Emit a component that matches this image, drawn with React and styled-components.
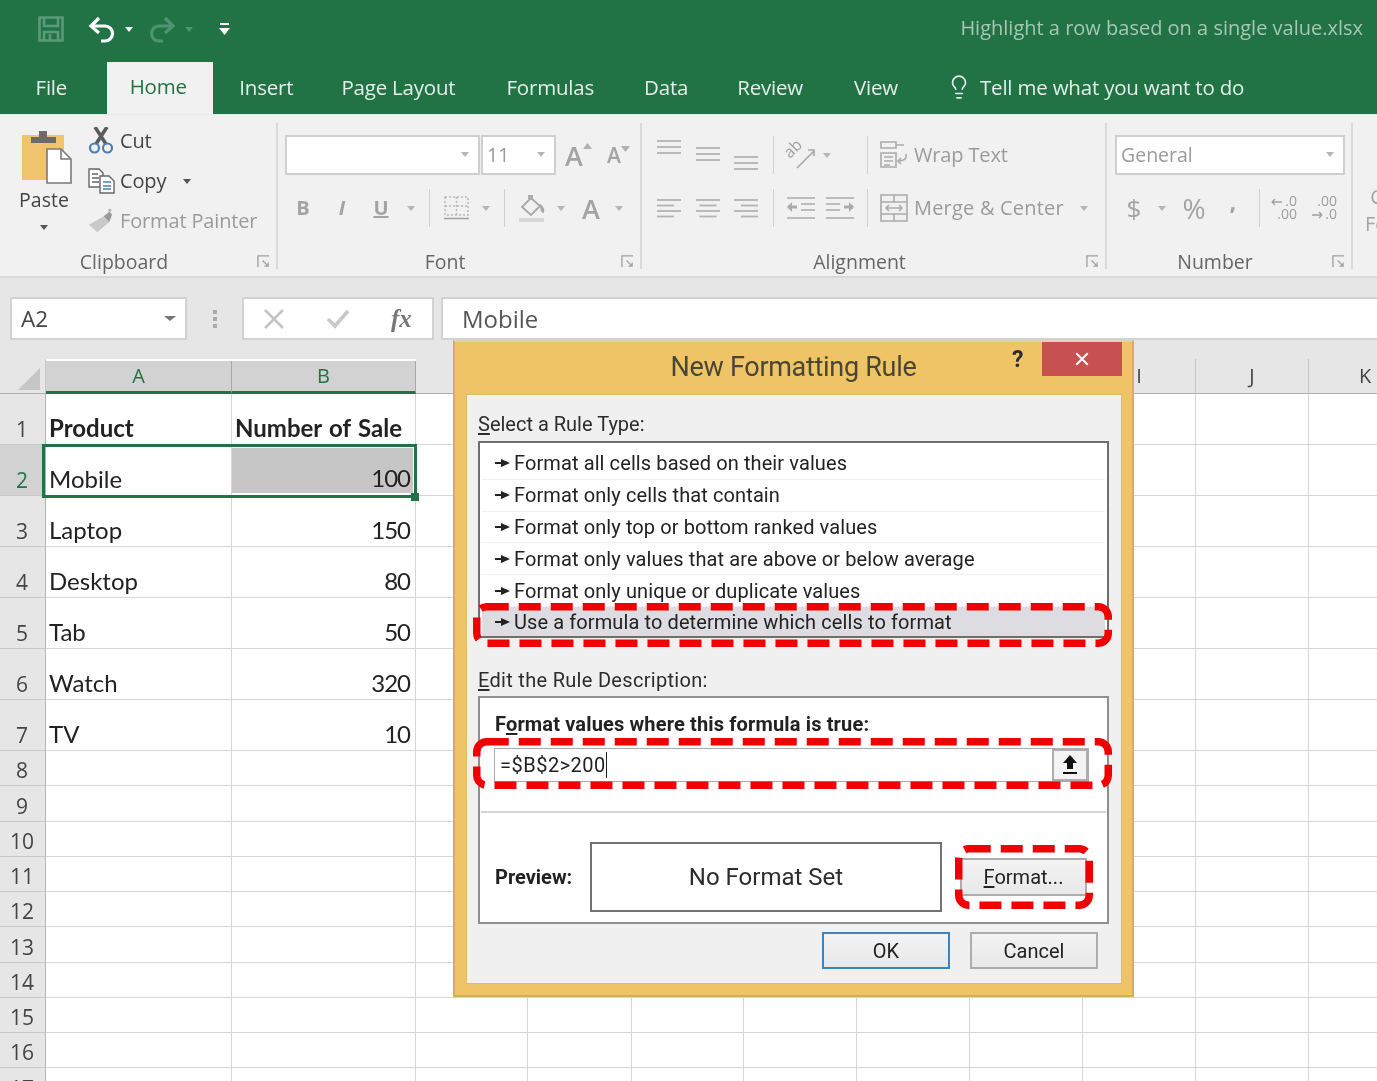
import React from "react";
import styled, { createGlobalStyle } from "styled-components";
import { Lightbulb } from "lucide-react";

const Global = createGlobalStyle`
  html, body { margin: 0; padding: 0; background: #fff; overflow: hidden; }
  * { box-sizing: border-box; }
`;

const Page = styled.div`
  position: relative;
  width: 1377px;
  height: 1081px;
  overflow: hidden;
  font-family: "Open Sans", "Noto Sans", sans-serif;
  color: #444;
  filter: blur(0.3px);
`;

const TitleBar = styled.div`
  height: 62px;
  padding: 0 14px 4px 38px;
  display: flex;
  align-items: center;
  background: #217346;
`;
const DocTitle = styled.div`
  margin-left: auto;
  margin-bottom: 4px;
  font-size: 20px;
  letter-spacing: 0;
  color: #a6c7b4;
  white-space: nowrap;
`;

const Tabs = styled.div`
  height: 52px;
  padding-left: 10px;
  display: flex;
  align-items: stretch;
  background: #217346;
`;
const Tab = styled.div`
  padding: ${(p) => (p.$active ? "0 26px 4px 23px" : "0 25.5px 2px")};
  margin-left: ${(p) => p.$ml || 0}px;
  display: flex;
  align-items: center;
  gap: 8px;
  font-size: 20.5px;
  letter-spacing: -0.2px;
  color: ${(p) => (p.$active ? "#217346" : "#e4eee8")};
  background: ${(p) => (p.$active ? "#f1f1f1" : "transparent")};
  white-space: nowrap;
`;

const Ribbon = styled.div`
  height: 164px;
  padding: 8px 0 7px;
  display: flex;
  align-items: stretch;
  background: #f1f1f1;
  border-top: 1px solid #dff0e6;
  border-bottom: 2px solid #d8d8d8;
`;
const Group = styled.section`
  width: ${(p) => p.$w}px;
  flex: none;
  display: flex;
  flex-direction: column;
  border-right: 2px solid #dadada;
`;
const GroupBody = styled.div`
  flex: 1;
  min-height: 0;
  display: ${(p) => (p.$row ? "flex" : "block")};
  padding-top: ${(p) => (p.$row ? 0 : 12)}px;
`;
const GroupFoot = styled.div`
  height: 18px;
  display: flex;
  align-items: center;
`;
const GroupLabel = styled.div`
  flex: 1;
  padding-top: 4px;
  text-align: center;
  font-size: 19.5px;
  line-height: 18px;
  color: #666;
  white-space: nowrap;
`;
const LauncherSlot = styled.div`
  width: 28px;
  height: 16px;
  display: flex;
  justify-content: center;
  padding: 3px 0 0 3px;
`;
const Row = styled.div`
  height: 40px;
  padding-left: ${(p) => p.$pl || 0}px;
  margin-top: ${(p) => p.$mt || 0}px;
  display: flex;
  align-items: center;
`;
const Tool = styled.div`
  width: ${(p) => p.$w}px;
  margin-left: ${(p) => p.$ml || 0}px;
  flex: none;
  display: flex;
  align-items: center;
  justify-content: center;
  font-size: ${(p) => p.$fs || 20}px;
  font-weight: ${(p) => p.$weight || 400};
  font-style: ${(p) => (p.$italic ? "italic" : "normal")};
  text-decoration: ${(p) => (p.$under ? "underline" : "none")};
  color: ${(p) => p.$color || "#a3a3a3"};
  line-height: 1;
`;
const Comma = styled(Tool)`
  padding-bottom: 14px;
`;
const Sep = styled.div`
  width: 1px;
  height: 38px;
  margin-left: ${(p) => p.$ml || 0}px;
  flex: none;
  background: #d0d0d0;
`;
const Caret = styled.div`
  width: 0;
  height: 0;
  margin-left: ${(p) => p.$ml || 0}px;
  flex: none;
  border-left: ${(p) => p.$s || 4.5}px solid transparent;
  border-right: ${(p) => p.$s || 4.5}px solid transparent;
  border-top: ${(p) => (p.$s ? p.$s * 0.9 : 5)}px solid ${(p) => p.$color || "#b5b5b5"};
`;
const RibbonText = styled.div`
  margin-left: ${(p) => p.$ml || 0}px;
  margin-bottom: 2px;
  flex: none;
  font-size: 20px;
  letter-spacing: ${(p) => p.$ls ?? -0.15}px;
  color: ${(p) => p.$color || "#9b9b9b"};
  white-space: nowrap;
`;
const ComboBox = styled.div`
  width: ${(p) => p.$w}px;
  height: 40px;
  margin-left: ${(p) => p.$ml || 0}px;
  padding: 0 9px 2px 4px;
  flex: none;
  display: flex;
  align-items: center;
  justify-content: space-between;
  font-size: 19.5px;
  color: #9b9b9b;
  background: #fff;
  border: 2px solid #cfcfcf;
`;
const PasteColumn = styled.div`
  width: 88px;
  flex: none;
  padding-top: 6px;
  display: flex;
  flex-direction: column;
  align-items: center;
`;
const PasteArt = styled.div`
  margin-left: 6px;
  height: 56px;
`;
const PasteLabel = styled.div`
  font-size: 19.5px;
  line-height: 30px;
  color: #444;
`;
const PasteCaret = styled.div`
  margin-top: 10px;
`;
const Rows = styled.div`
  margin-top: -2px;
  flex: 1;
`;
const Clipped = styled.div`
  padding: 60px 0 0 12px;
  font-size: 20px;
  line-height: 27px;
  color: #a3a3a3;
  white-space: nowrap;
`;

const FormulaBar = styled.div`
  height: 81px;
  padding: 19px 0 0 10px;
  display: flex;
  align-items: flex-start;
  background: #e6e6e6;
`;
const NameBox = styled.div`
  width: 177px;
  height: 43px;
  padding: 0 9px 0 9px;
  flex: none;
  display: flex;
  align-items: center;
  justify-content: space-between;
  font-size: 22.5px;
  color: #444;
  background: #fff;
  border: 2px solid #d2d2d2;
`;
const Dots = styled.div`
  width: 4px;
  height: 18px;
  margin: 13px 25px 0 26px;
  flex: none;
  display: flex;
  flex-direction: column;
  justify-content: space-between;
  &::before, &::after { content: ""; height: 4px; background: #aaa; }
  background: linear-gradient(#aaa, #aaa) 0 7px / 4px 4px no-repeat;
`;
const FxBox = styled.div`
  width: 192px;
  height: 43px;
  flex: none;
  display: flex;
  align-items: center;
  background: #fff;
  border: 2px solid #d2d2d2;
`;
const FxText = styled.span`
  margin-left: 41px;
  font-family: "Liberation Serif", serif;
  font-style: italic;
  font-weight: 700;
  font-size: 25px;
  color: #777;
`;
const FormulaInput = styled.div`
  width: 940px;
  height: 43px;
  margin-left: 7px;
  padding: 0 0 1px 19px;
  flex: none;
  display: flex;
  align-items: center;
  font-size: 24px;
  color: #555;
  background: #fff;
  border: 2px solid #d2d2d2;
`;

const Sheet = styled.div`
  position: relative;
  display: grid;
  grid-template-columns: 46px 186px 184px 112px 104px 112px 113px 113px 113px 113px 113px 113px;
  grid-template-rows: 35px repeat(7, 51px) repeat(10, 35.25px);
  height: 723px;
  overflow: hidden;
  background: #fff;
  font-family: "Lato", "Open Sans", sans-serif;
`;
const Corner = styled.div`
  padding: 9px 0 0 18px;
  background: #e6e6e6;
  border-bottom: 1px solid #b0b0b0;
  border-right: 1px solid #c8c8c8;
`;
const ColHead = styled.div`
  margin-top: ${(p) => (p.$on ? 2 : 0)}px;
  padding-bottom: 2px;
  display: flex;
  align-items: center;
  justify-content: center;
  font-family: "Open Sans", sans-serif;
  font-size: 20px;
  color: ${(p) => (p.$on ? "#217346" : "#444")};
  background: ${(p) => (p.$on ? "#d2d2d2" : "#e6e6e6")};
  border-right: 1px solid ${(p) => (p.$on ? "#a8a8a8" : "#c4c4c4")};
  border-bottom: ${(p) => (p.$on ? "3px solid #217346" : "1px solid #b0b0b0")};
`;
const RowHead = styled.div`
  padding: 0 1px 1px 0;
  display: flex;
  align-items: flex-end;
  justify-content: center;
  font-family: "Open Sans", sans-serif;
  font-size: 21px;
  line-height: 28px;
  color: ${(p) => (p.$on ? "#217346" : "#444")};
  background: ${(p) => (p.$on ? "#d2d2d2" : "#e6e6e6")};
  border-right: 1px solid #b4b4b4;
  border-bottom: 1px solid #c8c8c8;
`;
const Cell = styled.div`
  padding: 0 5px 1px 3px;
  display: flex;
  align-items: flex-end;
  justify-content: ${(p) => (p.$num ? "flex-end" : "flex-start")};
  font-size: 24px;
  line-height: 30px;
  font-weight: ${(p) => (p.$bold ? 700 : 400)};
  word-spacing: ${(p) => (p.$bold ? 1.5 : 0)}px;
  letter-spacing: ${(p) => (p.$num ? -1 : 0)}px;
  color: #222;
  white-space: nowrap;
  background: ${(p) => (p.$fill ? "#c6c6c6" : "#fff")};
  border-right: 1px solid #d6d6d6;
  border-bottom: 1px solid #d6d6d6;
  ${(p) => p.$fill && "border: solid #fff; border-width: 3px 3px 3px 0; padding: 0 3px 0 0;"}
`;
const Selection = styled.div`
  position: absolute;
  left: 42px;
  top: 85px;
  width: 375px;
  height: 54px;
  border: 3px solid #217346;
  &::after {
    content: "";
    position: absolute;
    right: -5px;
    bottom: -6px;
    width: 8px;
    height: 8px;
    background: #217346;
  }
`;

const Dialog = styled.div`
  position: absolute;
  left: 453px;
  top: 340px;
  width: 681px;
  height: 657px;
  display: flex;
  flex-direction: column;
  background: #efc466;
  border: 2px solid #d6ad58;
  border-top-color: #ddd3b8;
  font-family: "Roboto", "Open Sans", sans-serif;
  color: #2c2c2c;
`;
const DialogHead = styled.div`
  position: relative;
  height: 52px;
  flex: none;
  display: flex;
  align-items: center;
  justify-content: center;
  padding: 0 0 2px 0;
  font-size: 27px;
  letter-spacing: -0.3px;
  color: #4a4636;
`;
const Help = styled.div`
  position: absolute;
  left: 557px;
  top: 4px;
  font-size: 23px;
  font-weight: 700;
  color: #2c2c2c;
`;
const Close = styled.div`
  position: absolute;
  left: 587px;
  top: 0;
  width: 80px;
  height: 34px;
  display: flex;
  align-items: center;
  justify-content: center;
  background: #c75050;
`;
const Panel = styled.div`
  flex: 1;
  margin: 0 10px 11px 11px;
  padding: 0 12px 0 11px;
  background: #f0f0f0;
  border: 1px solid #dfbb69;
`;
const FieldLabel = styled.div`
  height: 24px;
  margin-top: ${(p) => p.$mt}px;
  font-size: 20px;
  line-height: 24px;
  letter-spacing: ${(p) => p.$ls || 0}px;
  color: #2c2c2c;
  white-space: nowrap;
  u { text-underline-offset: 2px; }
`;
const RuleList = styled.div`
  height: 197px;
  margin-top: 5px;
  padding: 5px 2px 0;
  overflow: hidden;
  background: #fff;
  border: 2px solid #6e6e6e;
`;
const RuleItem = styled.div`
  height: 31.8px;
  padding-left: 13px;
  display: flex;
  align-items: center;
  gap: 4px;
  font-size: 20px;
  letter-spacing: 0.1px;
  color: #222;
  white-space: nowrap;
  background: ${(p) => (p.$on ? "#dcdce1" : "#fff")};
  border-bottom: 1px solid #f0f0f0;
`;
const DescBox = styled.div`
  height: 228px;
  margin-top: 4px;
  padding: 14px 15px 0;
  background: #fff;
  border: 2px solid #8f8f8f;
`;
const DescTitle = styled.div`
  height: 24px;
  font-size: 20px;
  line-height: 24px;
  font-weight: 700;
  letter-spacing: 0.15px;
  color: #222;
  white-space: nowrap;
  u { text-underline-offset: 2px; }
`;
const RefInput = styled.div`
  width: 595px;
  height: 34px;
  margin: 12px 0 0 -1px;
  padding: 0 0 0 5px;
  display: flex;
  align-items: center;
  font-size: 20px;
  letter-spacing: 0.5px;
  color: #222;
  border: 1px solid #ababab;
`;
const TextCursor = styled.span`
  width: 1.5px;
  height: 26px;
  flex: none;
  background: #222;
`;
const RefButton = styled.div`
  width: 36px;
  height: 32px;
  margin-left: auto;
  flex: none;
  display: flex;
  align-items: center;
  justify-content: center;
  background: #f4f4f4;
  border: 2px solid #adadad;
`;
const Divider = styled.div`
  width: 625px;
  height: 2px;
  margin: 29px 0 0 -14px;
  background: #d6d6d6;
`;
const PreviewRow = styled.div`
  height: 70px;
  margin-top: 29px;
  display: flex;
  align-items: center;
`;
const PreviewLabel = styled.div`
  width: 95px;
  flex: none;
  font-size: 20px;
  font-weight: 700;
  color: #222;
`;
const PreviewBox = styled.div`
  width: 352px;
  height: 70px;
  flex: none;
  display: flex;
  align-items: center;
  justify-content: center;
  font-size: 24px;
  color: #2c2c2c;
  border: 2px solid #737373;
`;
const Btn = styled.div`
  width: ${(p) => p.$w || 128}px;
  height: ${(p) => p.$h || 37}px;
  margin-left: ${(p) => p.$ml || 0}px;
  flex: none;
  display: flex;
  align-items: center;
  justify-content: center;
  font-size: 20px;
  color: #222;
  background: linear-gradient(#f3f3f3, #e8e8e8);
  border: 2px solid ${(p) => p.$border || "#adadad"};
  u { text-underline-offset: 2px; }
`;
const BtnRow = styled.div`
  margin-top: 8px;
  padding-right: 11px;
  display: flex;
  justify-content: flex-end;
`;
const NoteFrame = styled.svg`
  position: absolute;
  left: ${(p) => p.$x - 455}px;
  top: ${(p) => p.$y - 342}px;
  overflow: visible;
`;

const Note = ({ x, y, w, h }) => (
  <NoteFrame $x={x} $y={y} width={w} height={h} viewBox={`0 0 ${w} ${h}`}>
    <rect x="3.75" y="3.75" width={w - 7.5} height={h - 7.5} rx="10" fill="none" stroke="#f00000" strokeWidth="7.5" strokeDasharray="22 10" />
  </NoteFrame>
);

const Save = () => (
  <svg width="26" height="26" viewBox="0 0 26 26" fill="none" stroke="#5b9a78" strokeWidth="2.6">
    <path d="M1.5 1.5h23v23h-23z" />
    <path d="M6 2v8h14V2M6 24v-8h14v8M12 18v6" />
  </svg>
);
const Undo = ({ color, flip }) => (
  <svg width="27" height="27" viewBox="0 0 27 27" fill="none" stroke={color} strokeWidth="3.2" style={flip ? { transform: "scaleX(-1)" } : undefined}>
    <path d="M11 2 3 10l8 7" />
    <path d="M3 10h14a6.500 6.500 0 0 1 0 15h-4" />
  </svg>
);
const Customize = () => (
  <svg width="11" height="13" viewBox="0 0 11 13" fill="#fff">
    <rect x="1" y="0" width="9" height="2" />
    <path d="M0 5h11L5.500 12z" />
  </svg>
);
const PasteIcon = () => (
  <svg width="50" height="56" viewBox="0 0 50 56">
    <path d="M0 6h42v45H0z" fill="#f0c36d" />
    <path d="M9 14V8h8V2h8v6h9v6z" fill="#6b6b6b" />
    <path d="M25 20h14l10 10v24H25z" fill="#fff" stroke="#7a7a7a" strokeWidth="1.6" />
    <path d="M39 20v10h10" fill="none" stroke="#7a7a7a" strokeWidth="1.6" />
  </svg>
);
const Scissors = () => (
  <svg width="26" height="28" viewBox="0 0 26 28" fill="none">
    <path d="M7 0 18 17M19 0 8 17" stroke="#5c5c5c" strokeWidth="3.6" />
    <circle cx="6.500" cy="21" r="4.500" stroke="#4a7fb5" strokeWidth="2.2" />
    <circle cx="19.500" cy="21" r="4.500" stroke="#4a7fb5" strokeWidth="2.2" />
  </svg>
);
const CopyIcon = () => (
  <svg width="27" height="26" viewBox="0 0 27 26" fill="#fff" stroke="#666" strokeWidth="1.4">
    <path d="M1 1h10l4 4v14H1z" />
    <path d="M4 6h6M4 10h7M4 14h7" />
    <path d="M12 8h9l5 5v12H12z" />
    <path d="M15 14h8M15 18h8M15 21h8" stroke="#4a7fb5" />
  </svg>
);
const Painter = () => (
  <svg width="28" height="26" viewBox="0 0 28 26">
    <path d="M17 8 23 14 10 25 1 17z" fill="#c9c9c9" />
    <path d="M17 8l6-5 3 3-3 8z" fill="#9a9a9a" />
    <path d="M22 0h3v3h-3z" fill="#b5b5b5" />
  </svg>
);
const Launcher = () => (
  <svg width="13" height="13" viewBox="0 0 14 14" fill="none" stroke="#a0a0a0" strokeWidth="1.4">
    <path d="M13 1H1v12" />
    <path d="M6 6l6 6M12 8v4H8" />
  </svg>
);
const Lines = ({ offset = 0, widths = [24, 24, 24], align = "left", gap = 6, w = 24, h = 30, color = "#b3b3b3" }) => (
  <svg width={w} height={h} viewBox={`0 0 ${w} ${h}`} stroke={color} strokeWidth="1.8">
    {widths.map((lw, i) => {
      const x = align === "left" ? 0 : align === "right" ? w - lw : (w - lw) / 2;
      return <line key={i} x1={x} x2={x + lw} y1={offset + i * gap} y2={offset + i * gap} />;
    })}
  </svg>
);
const Borders = () => (
  <svg width="25" height="24" viewBox="0 0 25 24" fill="none" stroke="#b8b8b8" strokeWidth="1.5">
    <path d="M1 1h23v18H1zM12.500 1v18M1 10h23" strokeDasharray="2 2" />
    <path d="M0 22.500h25" stroke="#a0a0a0" />
  </svg>
);
const Fill = () => (
  <svg width="28" height="28" viewBox="0 0 28 28" fill="none" stroke="#a8a8a8" strokeWidth="1.8">
    <path d="M12 4 3 13l9 8 9-9z" />
    <path d="M10 5V2h3v4" />
    <path d="M22 12c2 2 3 4 2 6-1.400-1-2-3-2-6z" fill="#8f8f8f" />
    <path d="M0 26h25" stroke="#d6d6d6" strokeWidth="4" />
  </svg>
);
const Orient = () => (
  <svg width="28" height="28" viewBox="0 0 28 28" fill="none" stroke="#a8a8a8" strokeWidth="1.7" overflow="visible">
    <text x="3" y="18" transform="rotate(-45 3 18)" fontSize="16" fontFamily="Open Sans" fill="#a0a0a0" stroke="none">ab</text>
    <path d="M10 27 27 10M21 9h6v6" />
  </svg>
);
const Wrap = () => (
  <svg width="28" height="28" viewBox="0 0 28 28" fill="none" stroke="#ababab" strokeWidth="1.6">
    <path d="M1 1h15v6H1zM16 4h8M1 12h15v14H1zM4 16h9M4 20h9M4 24h6" />
    <path d="M26 13c1 5-2 7-8 7M21 17l-3 3 3 3" />
  </svg>
);
const Merge = () => (
  <svg width="28" height="28" viewBox="0 0 28 28" fill="none" stroke="#ababab" strokeWidth="1.6">
    <path d="M1 1h26v26H1zM1 8h26M1 20h26M14 1v7M14 20v7" />
    <path d="M6 14h16M9 11l-3 3 3 3M19 11l3 3-3 3" />
  </svg>
);
const Indent = ({ flip }) => (
  <svg width="28" height="24" viewBox="0 0 28 24" fill="none" stroke="#ababab" strokeWidth="1.7" style={flip ? { transform: "scaleX(-1)" } : undefined}>
    <path d="M0 2h28M14 8h14M14 14h14M0 22h28" />
    <path d="M1 11h9" strokeWidth="3" />
    <path d="M5 6l-5 5 5 5z" fill="#ababab" stroke="none" />
  </svg>
);
const Decimal = ({ top, bottom, arrowTop }) => (
  <svg width="25" height="28" viewBox="0 0 25 28" fill="#a0a0a0" fontFamily="Open Sans" fontSize="14" textAnchor="end" overflow="visible">
    <text x="25" y="12">{top}</text>
    <text x="25" y="25">{bottom}</text>
    <path d={arrowTop ? "M0 8h10M0 8l3-3M0 8l3 3" : "M0 21h10M10 21l-3-3M10 21l-3 3"} fill="none" stroke="#a0a0a0" strokeWidth="1.4" />
  </svg>
);
const Grow = ({ up }) => (
  <svg width="9" height="6" viewBox="0 0 9 6" fill="#b0b0b0">
    <path d={up ? "M0 6h9L4.500 0z" : "M0 0h9L4.500 6z"} />
  </svg>
);
const SmallUp = styled.span`
  align-self: flex-start;
  margin-top: 1px;
  display: flex;
`;
const Cross = ({ size = 22, color = "#c4c4c4", w = 2.6 }) => (
  <svg width={size} height={size} viewBox="0 0 22 22" stroke={color} strokeWidth={w}>
    <path d="M2 2 20 20M20 2 2 20" />
  </svg>
);
const Check = () => (
  <svg width="24" height="20" viewBox="0 0 24 20" fill="none" stroke="#c8c8c8" strokeWidth="3.6">
    <path d="M2 10l7 7L22 2" />
  </svg>
);
const Triangle = () => (
  <svg width="22" height="22" viewBox="0 0 22 22"><path d="M22 0v22H0z" fill="#c6c6c6" /></svg>
);
const Bullet = () => (
  <svg width="15" height="8" viewBox="0 0 15 8" style={{ flex: "none" }}>
    <path d="M0 3h6V0l9 4-9 4V5H0z" fill="#222" />
  </svg>
);
const UpArrow = () => (
  <svg width="16" height="20" viewBox="0 0 16 20" fill="#111">
    <path d="M8 0l7 8h-4v6H5V8H1z" />
    <rect x="1" y="17" width="14" height="2" />
  </svg>
);

const columns = ["A", "B", "", "", "", "", "", "", "I", "J", "K"];
const data = [
  ["Product", "Number of Sale"],
  ["Mobile", 100],
  ["Laptop", 150],
  ["Desktop", 80],
  ["Tab", 50],
  ["Watch", 320],
  ["TV", 10],
];
const rules = [
  "Format all cells based on their values",
  "Format only cells that contain",
  "Format only top or bottom ranked values",
  "Format only values that are above or below average",
  "Format only unique or duplicate values",
  "Use a formula to determine which cells to format",
];

const Foot = ({ label }) => (
  <GroupFoot>
    <GroupLabel>{label}</GroupLabel>
    <LauncherSlot><Launcher /></LauncherSlot>
  </GroupFoot>
);

const renderRow = (n) => {
  const record = data[n - 1];
  const filler = Array.from({ length: 9 }, (_, i) => <Cell key={`f${n}-${i}`} />);
  return (
    <React.Fragment key={n}>
      <RowHead $on={n === 2}>{n}</RowHead>
      <Cell $bold={n === 1}>{record ? record[0] : ""}</Cell>
      <Cell $bold={n === 1} $num={!!record && n > 1} $fill={n === 2}>{record ? record[1] : ""}</Cell>
      {filler}
    </React.Fragment>
  );
};

export default function App() {
  return (
    <Page>
      <Global />
      <TitleBar>
        <Tool $w={26}><Save /></Tool>
        <Tool $w={27} $ml={24}><Undo color="#fff" /></Tool>
        <Caret $ml={10} $color="#fff" />
        <Tool $w={27} $ml={16}><Undo color="#4f9470" flip /></Tool>
        <Caret $ml={9} $color="#4f9470" />
        <Tool $w={11} $ml={26}><Customize /></Tool>
        <DocTitle>Highlight a row based on a single value.xlsx</DocTitle>
      </TitleBar>
      <Tabs>
        <Tab>File</Tab>
        <Tab $active $ml={14}>Home</Tab>
        <Tab $ml={1}>Insert</Tab>
        <Tab $ml={-3}>Page Layout</Tab>
        <Tab>Formulas</Tab>
        <Tab $ml={-1}>Data</Tab>
        <Tab $ml={-2}>Review</Tab>
        <Tab>View</Tab>
        <Tab $ml={-3}><Lightbulb size={26} strokeWidth={1.5} />Tell me what you want to do</Tab>
      </Tabs>
      <Ribbon>
        <Group $w={278}>
          <GroupBody $row>
            <PasteColumn>
              <PasteArt><PasteIcon /></PasteArt>
              <PasteLabel>Paste</PasteLabel>
              <PasteCaret><Caret $color="#555" /></PasteCaret>
            </PasteColumn>
            <Rows>
              <Row><Tool $w={26}><Scissors /></Tool><RibbonText $ml={6} $color="#444">Cut</RibbonText></Row>
              <Row><Tool $w={27}><CopyIcon /></Tool><RibbonText $ml={5} $color="#444">Copy</RibbonText><Caret $ml={17} $color="#555" /></Row>
              <Row><Tool $w={26}><Painter /></Tool><RibbonText $ml={6}>Format Painter</RibbonText></Row>
            </Rows>
          </GroupBody>
          <Foot label="Clipboard" />
        </Group>
        <Group $w={364}>
          <GroupBody>
            <Row $pl={7}>
              <ComboBox $w={195}><span /><Caret /></ComboBox>
              <ComboBox $w={75} $ml={1}>11<Caret /></ComboBox>
              <Tool $w={23} $ml={11} $fs={27} $weight={600}>A<SmallUp><Grow up /></SmallUp></Tool>
              <Tool $w={23} $ml={17} $fs={21} $weight={600}>A<SmallUp><Grow /></SmallUp></Tool>
            </Row>
            <Row $pl={15} $mt={13}>
              <Tool $w={20} $weight={700}>B</Tool>
              <Tool $w={20} $ml={19} $italic $weight={700}>I</Tool>
              <Tool $w={20} $ml={19} $under $weight={700}>U</Tool>
              <Caret $ml={16} />
              <Sep $ml={14} />
              <Tool $w={25} $ml={14}><Borders /></Tool>
              <Caret $ml={13} />
              <Sep $ml={14} />
              <Tool $w={28} $ml={14}><Fill /></Tool>
              <Caret $ml={10} />
              <Tool $w={18} $ml={17} $fs={27} $weight={600}>A</Tool>
              <Caret $ml={15} />
            </Row>
          </GroupBody>
          <Foot label="Font" />
        </Group>
        <Group $w={465}>
          <GroupBody>
            <Row $pl={15}>
              <Tool $w={24}><Lines offset={1} /></Tool>
              <Tool $w={24} $ml={15}><Lines offset={8} /></Tool>
              <Tool $w={24} $ml={14}><Lines offset={17} /></Tool>
              <Sep $ml={15} />
              <Tool $w={28} $ml={13}><Orient /></Tool>
              <Caret $ml={8} />
              <Sep $ml={36} />
              <Tool $w={28} $ml={12}><Wrap /></Tool>
              <RibbonText $ml={6}>Wrap Text</RibbonText>
            </Row>
            <Row $pl={15} $mt={13}>
              <Tool $w={24}><Lines h={22} gap={5.5} offset={3} widths={[24, 17, 24, 17]} /></Tool>
              <Tool $w={24} $ml={15}><Lines h={22} gap={5.5} offset={3} widths={[24, 17, 24, 17]} align="center" /></Tool>
              <Tool $w={24} $ml={14}><Lines h={22} gap={5.5} offset={3} widths={[24, 17, 24, 17]} align="right" /></Tool>
              <Sep $ml={15} />
              <Tool $w={28} $ml={13}><Indent /></Tool>
              <Tool $w={28} $ml={11}><Indent flip /></Tool>
              <Sep $ml={13} />
              <Tool $w={28} $ml={12}><Merge /></Tool>
              <RibbonText $ml={6} $ls={0.2}>Merge &amp; Center</RibbonText>
              <Caret $ml={16} />
            </Row>
          </GroupBody>
          <Foot label="Alignment" />
        </Group>
        <Group $w={246}>
          <GroupBody>
            <Row $pl={8}><ComboBox $w={230}>General<Caret /></ComboBox></Row>
            <Row $pl={18} $mt={13}>
              <Tool $w={18} $fs={26}>$</Tool>
              <Caret $ml={15} />
              <Tool $w={24} $ml={16} $fs={28}>%</Tool>
              <Comma $w={8} $ml={23} $fs={24} $weight={700}>,</Comma>
              <Sep $ml={22} />
              <Tool $w={25} $ml={12}><Decimal top=".0" bottom=".00" arrowTop /></Tool>
              <Tool $w={25} $ml={15}><Decimal top=".00" bottom=".0" /></Tool>
            </Row>
          </GroupBody>
          <Foot label="Number" />
        </Group>
        <Clipped>
          &nbsp;Conditional<br />Formatting
        </Clipped>
      </Ribbon>
      <FormulaBar>
        <NameBox>A2<Caret $color="#777" $s={6} /></NameBox>
        <Dots />
        <FxBox>
          <Tool $w={22} $ml={19}><Cross /></Tool>
          <Tool $w={24} $ml={41}><Check /></Tool>
          <FxText>fx</FxText>
        </FxBox>
        <FormulaInput>Mobile</FormulaInput>
      </FormulaBar>
      <Sheet>
        <Corner><Triangle /></Corner>
        {columns.map((c, i) => <ColHead key={i} $on={i < 2}>{c}</ColHead>)}
        {Array.from({ length: 17 }, (_, i) => renderRow(i + 1))}
        <Selection />
      </Sheet>
      <Dialog>
        <DialogHead>
          New Formatting Rule
          <Help>?</Help>
          <Close><Cross size={14} color="#fff" w={3} /></Close>
        </DialogHead>
        <Panel>
          <FieldLabel $mt={17}><u>S</u>elect a Rule Type:</FieldLabel>
          <RuleList>
            {rules.map((r, i) => (
              <RuleItem key={r} $on={i === 5}><Bullet />{r}</RuleItem>
            ))}
          </RuleList>
          <FieldLabel $mt={30} $ls={0.3}><u>E</u>dit the Rule Description:</FieldLabel>
          <DescBox>
            <DescTitle>F<u>o</u>rmat values where this formula is true:</DescTitle>
            <RefInput>=$B$2&gt;200<TextCursor /><RefButton><UpArrow /></RefButton></RefInput>
            <Divider />
            <PreviewRow>
              <PreviewLabel>Preview:</PreviewLabel>
              <PreviewBox>No Format Set</PreviewBox>
              <Btn $w={127} $ml={18} $h={38}><span><u>F</u>ormat...</span></Btn>
            </PreviewRow>
          </DescBox>
          <BtnRow>
            <Btn $border="#3c84bd">OK</Btn>
            <Btn $ml={20}>Cancel</Btn>
          </BtnRow>
        </Panel>
        <Note x={473} y={603} w={639} h={44} />
        <Note x={473} y={738} w={639} h={51} />
        <Note x={955} y={845} w={138} h={64} />
      </Dialog>
    </Page>
  );
}
